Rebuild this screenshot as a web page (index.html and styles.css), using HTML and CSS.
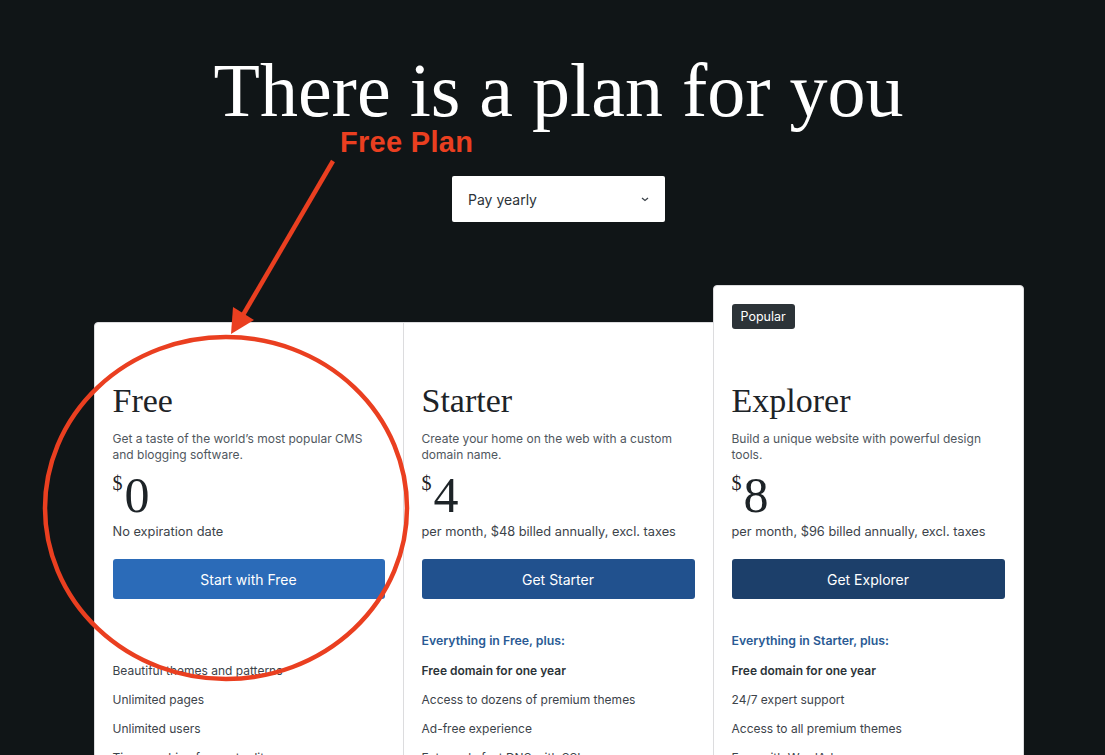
FILE: index.html
```html
<!DOCTYPE html>
<html lang="en">
<head>
    <meta charset="UTF-8">
    <meta name="viewport" content="width=device-width, initial-scale=1.0">
    <title>Plans</title>
    <link rel="stylesheet" href="styles.css">
</head>
<body>
    <div class="page">
        <h1 class="page-title">There is a plan for you</h1>

        <div class="term-select">
            <span>Pay yearly</span>
            <svg class="chevron" width="10" height="10" viewBox="0 0 10 10">
                <path d="M2 4 L5 6.5 L8 4" fill="none" stroke="#3c434a" stroke-width="1.3"/>
            </svg>
        </div>

        <div class="plans">
            <div class="card card-first">
                <h2 class="plan-name">Free</h2>
                <p class="plan-desc">Get a taste of the world’s most popular CMS and blogging software.</p>
                <div class="price"><sup>$</sup>0</div>
                <p class="billing">No expiration date</p>
                <button class="btn btn-free">Start with Free</button>
                <p class="feature-head">&nbsp;</p>
                <ul class="features">
                    <li>Beautiful themes and patterns</li>
                    <li>Unlimited pages</li>
                    <li>Unlimited users</li>
                    <li>Time machine for post edits</li>
                </ul>
            </div>

            <div class="card">
                <h2 class="plan-name">Starter</h2>
                <p class="plan-desc">Create your home on the web with a custom domain name.</p>
                <div class="price"><sup>$</sup>4</div>
                <p class="billing">per month, $48 billed annually, excl. taxes</p>
                <button class="btn btn-starter">Get Starter</button>
                <p class="feature-head">Everything in Free, plus:</p>
                <ul class="features">
                    <li class="strong">Free domain for one year</li>
                    <li>Access to dozens of premium themes</li>
                    <li>Ad-free experience</li>
                    <li>Extremely fast DNS with SSL</li>
                </ul>
            </div>

            <div class="card card-featured">
                <span class="badge">Popular</span>
                <h2 class="plan-name">Explorer</h2>
                <p class="plan-desc">Build a unique website with powerful design tools.</p>
                <div class="price"><sup>$</sup>8</div>
                <p class="billing">per month, $96 billed annually, excl. taxes</p>
                <button class="btn btn-explorer">Get Explorer</button>
                <p class="feature-head">Everything in Starter, plus:</p>
                <ul class="features">
                    <li class="strong">Free domain for one year</li>
                    <li>24/7 expert support</li>
                    <li>Access to all premium themes</li>
                    <li>Earn with WordAds</li>
                </ul>
            </div>
        </div>
    </div>

    <!-- annotation drawn over the page -->
    <div class="note-label">Free Plan</div>
    <svg class="note" width="1105" height="755" viewBox="0 0 1105 755">
        <line x1="333" y1="161" x2="243" y2="315" stroke="#ea3f20" stroke-width="4.5"/>
        <polygon points="231,334 233,307 254,320" fill="#ea3f20"/>
        <ellipse cx="226" cy="508" rx="181" ry="171" fill="none" stroke="#ea3f20" stroke-width="4.5"/>
    </svg>
</body>
</html>
```

FILE: styles.css
```css
body {
    margin: 0;
    background-color: #101517;
    font-family: "Inter", "Liberation Sans", sans-serif;
    overflow: hidden;
}

.page {
    padding-left: 12px;
    display: flex;
    flex-direction: column;
    align-items: center;
}

.page-title {
    margin: 47px 0 0;
    font-family: "Liberation Serif", serif;
    font-weight: normal;
    font-size: 76px;
    line-height: 86px;
    color: #fff;
}

.term-select {
    margin-top: 43px;
    width: 213px;
    height: 46px;
    box-sizing: border-box;
    padding: 0 16px;
    background: #fff;
    border-radius: 2px;
    display: flex;
    align-items: center;
    justify-content: space-between;
    font-size: 14px;
    color: #2c3338;
}

.chevron {
    margin-right: -1px;
}

.plans {
    margin-top: 63px;
    display: grid;
    grid-template-columns: 310px 310px 310px;
    align-items: start;
}

.card {
    margin-top: 37px;
    margin-left: -1px;
    padding: 58px 18px 40px;
    background: #fff;
    border: 1px solid #dcdcde;
    height: 600px;
}

.card-first {
    margin-left: 0;
    border-radius: 4px 0 0 0;
}

.card-featured {
    margin-top: 0;
    padding-top: 18px;
    border-radius: 4px 4px 0 0;
}

.badge {
    display: inline-block;
    height: 25px;
    line-height: 25px;
    padding: 0 9px;
    margin-bottom: 52px;
    background: #2c3338;
    color: #fff;
    font-size: 12.5px;
    border-radius: 3px;
}

.plan-name {
    margin: 0;
    font-family: "Liberation Serif", serif;
    font-weight: normal;
    font-size: 34px;
    line-height: 40px;
    color: #1d2327;
}

.plan-desc {
    margin: 10px 0 0;
    font-size: 12px;
    line-height: 16px;
    color: #50575e;
}

.price {
    margin-top: 8px;
    font-family: "Liberation Serif", serif;
    font-size: 50px;
    line-height: 48px;
    color: #1d2327;
}

.price sup {
    font-size: 20px;
    vertical-align: top;
    line-height: 20px;
    position: relative;
    top: 2px;
    margin-right: 2px;
}

.billing {
    margin: 3px 0 0;
    font-size: 12.8px;
    line-height: 20px;
    color: #3c434a;
}

.btn {
    display: block;
    width: 100%;
    height: 40px;
    margin-top: 17px;
    border: none;
    border-radius: 3px;
    color: #fff;
    font-family: inherit;
    font-size: 14px;
}

.btn-free {
    background-color: #2b6bb8;
}

.btn-starter {
    background-color: #21518e;
}

.btn-explorer {
    background-color: #1c3f6a;
}

.feature-head {
    margin: 32px 0 0;
    font-size: 12.3px;
    line-height: 20px;
    font-weight: 600;
    color: #2a5a94;
}

.features {
    list-style: none;
    margin: 10px 0 0;
    padding: 0;
    font-size: 12px;
    line-height: 20px;
    color: #3c434a;
}

.features li {
    margin-bottom: 9px;
}

.features .strong {
    font-weight: 600;
    color: #2c3338;
}

.note {
    position: absolute;
    top: 0;
    left: 0;
    pointer-events: none;
}

.note-label {
    position: absolute;
    top: 126px;
    left: 340px;
    font-family: "Liberation Sans", sans-serif;
    font-weight: bold;
    font-size: 29px;
    color: #ea3f20;
    letter-spacing: 0.3px;
}
```
